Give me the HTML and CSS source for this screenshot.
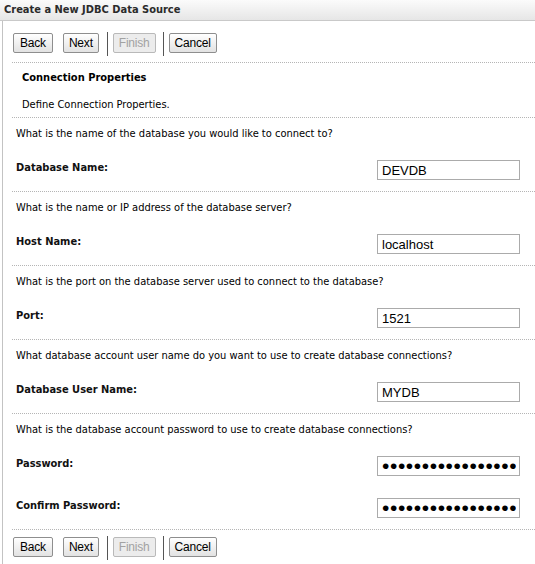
FILE: index.html
```html
<!DOCTYPE html>
<html>
<head>
<meta charset="utf-8">
<link rel="stylesheet" href="styles.css">
</head>
<body>
<div class="header">Create a New JDBC Data Source</div>
<div class="page">
  <div class="btnbar top">
    <button class="btn btn-back">Back</button>
    <button class="btn btn-next">Next</button>
    <span class="sep"></span>
    <button class="btn btn-finish" disabled>Finish</button>
    <span class="sep"></span>
    <button class="btn">Cancel</button>
  </div>
  <div class="intro">
    <div class="intro-title">Connection Properties</div>
    <div class="intro-desc">Define Connection Properties.</div>
  </div>
  <div class="section">
    <div class="question">What is the name of the database you would like to connect to?</div>
    <div class="field"><label class="label">Database Name:</label><input class="input" type="text" value="DEVDB"></div>
  </div>
  <div class="section">
    <div class="question">What is the name or IP address of the database server?</div>
    <div class="field"><label class="label">Host Name:</label><input class="input" type="text" value="localhost"></div>
  </div>
  <div class="section">
    <div class="question">What is the port on the database server used to connect to the database?</div>
    <div class="field"><label class="label">Port:</label><input class="input" type="text" value="1521"></div>
  </div>
  <div class="section">
    <div class="question">What database account user name do you want to use to create database connections?</div>
    <div class="field"><label class="label">Database User Name:</label><input class="input" type="text" value="MYDB"></div>
  </div>
  <div class="section">
    <div class="question">What is the database account password to use to create database connections?</div>
    <div class="field"><label class="label">Password:</label><input class="input pass" type="password" value="aaaaaaaaaaaaaaaaa"></div>
    <div class="field"><label class="label">Confirm Password:</label><input class="input pass" type="password" value="aaaaaaaaaaaaaaaaa"></div>
  </div>
  <div class="btnbar bottom">
    <button class="btn btn-back">Back</button>
    <button class="btn btn-next">Next</button>
    <span class="sep"></span>
    <button class="btn btn-finish" disabled>Finish</button>
    <span class="sep"></span>
    <button class="btn">Cancel</button>
  </div>
</div>
</body>
</html>
```
FILE: styles.css
```css
html, body {
  margin: 0;
  padding: 0;
  background: #ffffff;
}
body {
  font-family: "DejaVu Sans Condensed", "DejaVu Sans", Verdana, sans-serif;
  font-stretch: condensed;
  font-size: 11px;
  color: #000;
  width: 535px;
  height: 564px;
  overflow: hidden;
}
.header {
  height: 20px;
  line-height: 20px;
  padding-left: 4px;
  font-weight: bold;
  font-size: 11px;
  color: #2b2b2b;
  background: linear-gradient(#fbfbfb, #e6e6e6);
  border-bottom: 1px solid #c9c9c9;
}
.page {
  margin-left: 2px;
  border-left: 1px solid #c3c3c3;
  height: 543px;
}
.btnbar {
  display: flex;
  align-items: flex-start;
  padding-left: 10px;
}
.btnbar.top {
  padding-top: 12px;
  height: 29px;
}
.btnbar.bottom {
  border-top: 1px dotted #b5b5b5;
  margin-left: 9px;
  padding-left: 1px;
  padding-top: 7px;
  height: 30px;
}
.btn {
  font-family: "Liberation Sans", Arial, sans-serif;
  font-stretch: normal;
  font-size: 12px;
  letter-spacing: -0.2px;
  color: #000;
  height: 20px;
  padding: 0 5px;
  margin: 0 10px 0 0;
  border: 1px solid #8e8e8e;
  border-radius: 2px;
  background: linear-gradient(#ffffff, #e2e2e2);
  line-height: 18px;
}
.btn-back {
  padding: 0 6px;
  margin-right: 10px;
}
.btn-next {
  margin-right: 8px;
}
.btn-finish {
  margin-right: 7px;
}
.btn[disabled] {
  color: #a2a2a2;
  border-color: #b9b9b9;
  background: #ececec;
}
.sep {
  width: 1px;
  height: 24px;
  margin-top: -1px;
  background: #555;
  margin-right: 5px;
}
.intro {
  margin-left: 9px;
  border-top: 1px dotted #b5b5b5;
  padding-left: 10px;
}
.intro-title {
  font-weight: bold;
  height: 29px;
  line-height: 30px;
}
.intro-desc {
  height: 25px;
  line-height: 25px;
}
.section {
  border-top: 1px dotted #b5b5b5;
  margin-left: 9px;
}
.question {
  height: 31px;
  line-height: 32px;
  padding-left: 4px;
  white-space: nowrap;
}
.field {
  display: flex;
  align-items: center;
  justify-content: space-between;
  height: 42px;
  padding-left: 4px;
  padding-right: 15px;
}
.label {
  font-weight: bold;
  color: #111;
  margin-top: -6px;
}
.input {
  box-sizing: border-box;
  width: 143px;
  height: 20px;
  border: 1px solid #ababab;
  padding: 0 4px;
  margin: 0;
  font-family: "Liberation Sans", Arial, sans-serif;
  font-stretch: normal;
  font-size: 13px;
  color: #000;
  background: #fff;
  outline: none;
}
.input.pass {
  font-size: 21px;
  letter-spacing: 0.6px;
  padding: 0 3px 0 4px;
  line-height: 18px;
}
```
